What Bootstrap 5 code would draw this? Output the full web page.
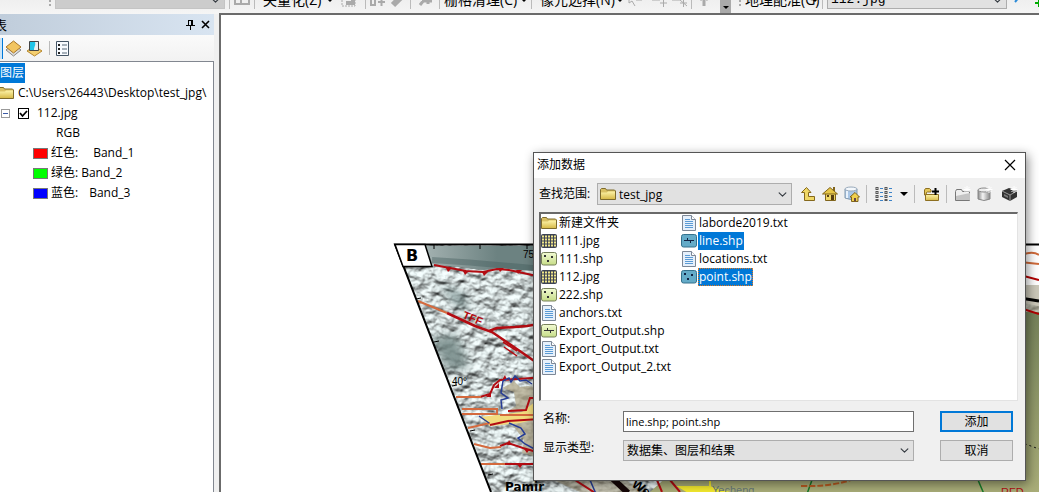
<!DOCTYPE html>
<html lang="zh-CN">
<head>
<meta charset="utf-8">
<meta name="viewport" content="width=device-width, initial-scale=1">
<title>添加数据</title>
<link href="https://cdn.jsdelivr.net/npm/bootstrap@5.3.0/dist/css/bootstrap.min.css" rel="stylesheet">
<style>
  :root { --ui: #f0f0f0; --sel: #0078d7; }
  body { background: var(--ui); color: #000; font: 12px/20px "Open Sans", "Noto Sans CJK SC", sans-serif; }
  button, input, select { font: inherit; color: inherit; }
  svg { display: block; flex: none; }
  .icon-btn { border: 0; padding: 0; background: none; flex: none; }

  /* menu strip, scrolled half out at the top */
  .strip { height: 14px; background: linear-gradient(#efefef, #f5f5f5); }
  .strip-row { height: 28px; margin-top: -14px; padding-left: 49px; font-size: 14px; white-space: nowrap; }
  .strip-row > * { flex: none; }
  .strip-row .icon-btn { width: 16px; height: 16px; }
  .strip-row svg { fill: none; stroke: #aaa; stroke-width: 2; }
  .menu-btn { border: 0; padding: 0; background: none; text-align: left; }
  .menu-w { width: 64px; }
  .menu-l { width: 77px; }
  .menu-r { width: 67px; }
  .vr-line { width: 1px; height: 18px; background: #bbb; }
  .grip { width: 2px; height: 16px; background: repeating-linear-gradient(#aaa 0 2px, transparent 2px 4px); }
  .caret { width: 0; height: 0; border: 3px solid transparent; border-top-color: #000; border-bottom: 0; }
  .form-select.combo { height: 21px; padding: 0 20px 0 3px; font: inherit; color: #000; border: 1px solid #adadad; border-radius: 0; background-color: #e1e1e1; background-size: 9px 9px; background-position: right 4px center; line-height: 19px; }
  .form-select.strip-combo { height: 18px; line-height: 16px; }
  .form-select.combo-off { width: 170px; background-color: #ccc; border-color: #c4c4c4; }
  .form-select.combo-ras { width: 180px; font-family: "Liberation Mono", monospace; font-size: 13px; }
  .strip-row .more { width: 11px; height: 26px; background: #aaa; }

  /* table of contents */
  .toc { width: 214px; flex: none; }
  .toc-title { height: 21px; background: linear-gradient(90deg, #c0cddb, #d8e4f1); font-size: 13px; padding-right: 3px; }
  .toc-title span { margin-left: -6px; }
  .toc-tools { height: 26px; background: linear-gradient(#fafafa, #f2f2f2); }
  .toc-tools .icon-btn { margin: 0 2px; }
  .toc-tools .vr-line { height: 14px; margin: 0 4px; }
  .toc-on { width: 3px; height: 21px; background: #cce4f7; border-right: 1px solid var(--sel); }
  .tree { background: #fff; border-top: 1px solid #828790; border-right: 1px solid #828790; padding-top: 1px; white-space: nowrap; }
  .tree li { height: 20px; overflow: hidden; }
  .root-node { background: var(--sel); color: #fff; padding-right: 1px; }
  .tick { appearance: none; width: 11px; height: 11px; border: 1px solid #000; margin: 0; background: #fff; flex: none; }
  .tick:checked { background: #fff url("data:image/svg+xml,%3Csvg xmlns='http://www.w3.org/2000/svg' viewBox='0 0 9 9'%3E%3Cpath d='M1 4l2.5 3L8 2' fill='none' stroke='black' stroke-width='1.8'/%3E%3C/svg%3E"); }
  .twist { width: 9px; height: 9px; border: 1px solid #999; background: linear-gradient(#3b5aa5, #3b5aa5) center/5px 1px no-repeat #fff; padding: 0; flex: none; }
  .layer-row { padding-left: 1px; }
  .chip { width: 15px; height: 11px; border: 1px solid #777; flex: none; }
  .chip-r { background: #f00; }
  .chip-g { background: #0f0; }
  .chip-b { background: #00f; }
  .band { padding-left: 33px; gap: 3px; }

  .map-pane { border-left: 2px solid #6b6b6b; border-top: 2px solid #6b6b6b; margin-left: 5px; background: #fff; margin-top: -1px; }
  .map-pane svg { height: 477px; min-width: 818px; width: 100%; }

  /* dialog */
  .dlg { left: 533px; top: 152px; width: 493px; background: var(--ui); border: 1px solid #555; box-shadow: 2px 3px 10px rgba(0,0,0,.45); }
  .dlg-title { height: 25px; background: #fff; padding: 0 9px 2px 3px; }
  .dlg-tools { height: 34px; padding: 0 7px 2px 5px; }
  .dlg-tools .near { margin-left: 6px; }
  .where { width: 195px; }
  .form-select.where-combo { padding-left: 21px; height: 22px; }
  .where svg { left: 3px; top: 3px; }
  .files { margin: 0 7px 0 5px; height: 189px; background: #fff; border: 1px solid #e3e3e3; border-top: 2px solid #696969; border-left: 2px solid #696969; display: grid; grid-auto-flow: column; grid-template-rows: repeat(9, 18px); grid-auto-columns: 140px; }
  .files li { display: flex; align-items: center; line-height: 18px; gap: 1px; }
  .files a { color: #000; text-decoration: none; padding: 0 1px; white-space: nowrap; }
  .files a.on { background: var(--sel); color: #fff; }
  .files a.focus-on { outline: 1px dotted #e07820; outline-offset: -1px; }
  .fields { display: grid; grid-template-columns: 80px 1fr 73px; row-gap: 8px; padding: 10px 12px 19px 9px; align-items: center; }
  .fields label { margin-top: -5px; }
  .form-control.name-box { height: 21px; padding: 0 2px; border: 1px solid #6f6f6f; border-radius: 0; font-size: 11px; line-height: 19px; color: #000; }
  .field-cell { padding-right: 26px; }
  .btn.cmd { height: 21px; padding: 0; border: 1px solid #adadad; border-radius: 0; background: #e1e1e1; font-size: 12px; line-height: 18px; color: #000; }
  .btn.cmd-main { border: 2px solid var(--sel); line-height: 16px; }
</style>
</head>
<body class="overflow-hidden position-relative min-vh-100">

<svg width="0" height="0" class="position-absolute">
  <defs>
    <linearGradient id="gold" x2="0" y2="1"><stop stop-color="#fdf3a8"/><stop offset="1" stop-color="#d8bb4a"/></linearGradient>
    <linearGradient id="steel"><stop stop-color="#888"/><stop offset=".4" stop-color="#f4f4f4"/><stop offset="1" stop-color="#888"/></linearGradient>
    <linearGradient id="lime" x2="0" y2="1"><stop stop-color="#f2fad4"/><stop offset="1" stop-color="#c6dc86"/></linearGradient>
    <symbol id="folder" viewBox="0 0 16 14"><path d="M.5 12.500V2.500l1-1h4l1 1.500h8l1 1v8.500z" fill="#d9c063" stroke="#7d6a2c"/><path d="M1 12V5.500h6l1-1h7V12z" fill="url(#gold)"/></symbol>
    <symbol id="raster" viewBox="0 0 16 14"><rect width="16" height="14" rx="2" fill="#3d4354"/><path d="M1 2.500h14M1 5.500h14M1 8.500h14M1 11.500h14" stroke="#f0e68a" stroke-width="2" stroke-dasharray="2 1"/></symbol>
    <symbol id="points" viewBox="0 0 16 14"><rect x=".5" y=".5" width="15" height="12.500" rx="2" fill="url(#lime)" stroke="#77805a"/><path d="M3 3h2v2H3zM10 4h2v2h-2zM6 8h2v2H6z" fill="#333"/></symbol>
    <symbol id="points-on" viewBox="0 0 16 14"><rect x=".5" y=".5" width="15" height="12.500" rx="2" fill="#64abc8" stroke="#34718d"/><path d="M3 3h2v2H3zM10 4h2v2h-2zM6 8h2v2H6z" fill="#124"/></symbol>
    <symbol id="lines" viewBox="0 0 16 14"><rect x=".5" y=".5" width="15" height="12.500" rx="2" fill="url(#lime)" stroke="#77805a"/><path d="M3 6.500h10M6.500 4v3M9.500 6.500V9" stroke="#333" fill="none"/></symbol>
    <symbol id="lines-on" viewBox="0 0 16 14"><rect x=".5" y=".5" width="15" height="12.500" rx="2" fill="#64abc8" stroke="#34718d"/><path d="M3 6.500h10M6.500 4v3M9.500 6.500V9" stroke="#124" fill="none"/></symbol>
    <symbol id="text" viewBox="0 0 16 16"><path d="M1.500.5h9l4 4v11h-13z" fill="#e6f0fb" stroke="#7c8796"/><path d="M10.500.5v4h4" fill="#fff" stroke="#7c8796"/><path d="M4 4.500h5M4 6.500h8M4 8.500h8M4 10.500h8M4 12.500h8" stroke="#5b9bd5"/></symbol>
  </defs>
</svg>

<header class="strip overflow-hidden">
  <div class="strip-row d-flex align-items-center">
    <i class="grip"></i>
    <select class="form-select combo strip-combo combo-off ms-1" aria-label="图层" disabled><option></option></select>
    <i class="vr-line ms-1"></i>
    <button class="icon-btn mx-1" aria-label="栅格"><svg width="16" height="16"><path d="M1 3h14v9H1zM7 3v9M7 7h8"/></svg></button>
    <i class="vr-line me-2"></i>
    <button class="menu-btn menu-w">矢量化(Z)</button><i class="caret me-2"></i>
    <button class="icon-btn me-2"><svg width="16" height="16"><path d="M1 2v12h13V2" stroke-width="1" stroke-dasharray="2 1"/><path d="M5 11h7V5" stroke-width="4"/></svg></button>
    <i class="vr-line me-1"></i>
    <button class="icon-btn me-1"><svg width="16" height="16"><path d="M1 2h4v11H1zM8 10h7M11.500 6v8"/></svg></button>
    <button class="icon-btn me-1"><svg width="16" height="16"><path d="M3 13l9-9" stroke-width="6"/></svg></button>
    <i class="vr-line me-2"></i>
    <button class="icon-btn me-1"><svg width="16" height="16"><path d="M1 13l4-5M3 9h10M9 5v7" stroke-width="3"/></svg></button>
    <i class="vr-line me-1"></i>
    <button class="menu-btn menu-l">栅格清理(C)</button><i class="caret me-1"></i>
    <i class="vr-line me-2"></i>
    <button class="menu-btn menu-l">像元选择(N)</button><i class="caret me-1"></i>
    <button class="icon-btn me-2"><svg width="16" height="16"><path d="M2 1v10l3-2 3 5M9 8h6" stroke-width="1"/></svg></button>
    <button class="icon-btn me-1"><svg width="16" height="16"><path d="M1 8h8M9 11h7M12.500 7v8" stroke-width="1"/></svg></button>
    <button class="icon-btn me-1"><svg width="16" height="16"><path d="M1 8h8M9 11h7M12.500 7v8M9 8l7 6" stroke-width="1"/></svg></button>
    <i class="vr-line me-1"></i>
    <button class="icon-btn me-2"><svg width="16" height="16"><path d="M8 14V4M4 8l4-4 4 4" stroke-width="3"/></svg></button>
    <button class="icon-btn more d-flex flex-column align-items-center justify-content-end pb-1" aria-label="更多"><i class="caret"></i></button>
    <i class="grip ms-2 me-1"></i>
    <button class="menu-btn menu-r">地理配准(G)</button><i class="caret me-1"></i>
    <i class="vr-line me-1"></i>
    <select class="form-select combo strip-combo combo-ras" aria-label="栅格图层"><option>112.jpg</option></select>
    <button class="icon-btn me-2"><svg width="16" height="16"><path d="M8 10l6-7" stroke="#2a8ad8"/><path d="M4 11h8M8 7v8" stroke="#0a0" transform="translate(0 -7)"/></svg></button>
    <button class="icon-btn"><svg width="16" height="16"><path d="M8 10l6-7" stroke="#2a8ad8"/><path d="M4 11h8M8 7v8" stroke="#0a0"/></svg></button>
  </div>
</header>

<div class="d-flex align-items-stretch">
  <aside class="toc d-flex flex-column">
    <div class="toc-title d-flex align-items-center overflow-hidden">
      <span class="me-auto">表</span>
      <button class="icon-btn me-1" aria-label="固定"><svg width="11" height="11"><path d="M3.500 1v5M7.500 1v5M3 1.500h5M1 6.500h9M5.500 7v4" stroke="#000" fill="none"/><path d="M7 1v5" stroke="#000" stroke-width="2"/></svg></button>
      <button class="icon-btn" aria-label="关闭"><svg width="11" height="11"><path d="M2 2l7 7M9 2l-7 7" stroke="#000" stroke-width="1.600"/></svg></button>
    </div>
    <div class="toc-tools d-flex align-items-center">
      <i class="toc-on"></i>
      <button class="icon-btn" aria-label="按源列出"><svg width="17" height="17"><path d="M1 10l7.500-6L16 10l-7.500 6z" fill="#ddd" stroke="#888"/><path d="M1 7l7.500-6L16 7l-7.500 6z" fill="#f2c562" stroke="#a8762a"/></svg></button>
      <button class="icon-btn" aria-label="按可见性列出"><svg width="17" height="17"><path d="M1 11l7.500-5L16 11l-7.500 5z" fill="#f5cf70" stroke="#b5862c"/><path d="M3.500 1.500h9v9h-9z" fill="#21c5e8" stroke="#444"/><path d="M8 10c0-4 2-4 1-8h3v8z" fill="#eee"/></svg></button>
      <i class="vr-line"></i>
      <button class="icon-btn" aria-label="选项"><svg width="13" height="15"><path d="M.5.5h12v14H.5z" fill="#f8fbff" stroke="#456"/><path d="M2 3h2v2H2zM2 7h2v2H2zM2 11h2v2H2z" fill="#222"/><path d="M6 4h5M6 8h5M6 12h5" stroke="#567"/></svg></button>
    </div>
    <ul class="tree list-unstyled mb-0 flex-grow-1">
      <li><span class="root-node d-inline-block">图层</span></li>
      <li class="d-flex align-items-center gap-1"><svg width="14" height="14" viewBox="2 0 14 14"><use href="#folder" width="16" height="14"/></svg>C:\Users\26443\Desktop\test_jpg\</li>
      <li class="layer-row d-flex align-items-center"><button class="twist me-2" aria-label="折叠"></button><input class="tick" type="checkbox" id="lyr" checked><label for="lyr" class="ms-2">112.jpg</label></li>
      <li class="ps-5"><span class="ps-2">RGB</span></li>
      <li class="band d-flex align-items-center"><i class="chip chip-r"></i>红色:<span class="ms-2 ps-1">Band_1</span></li>
      <li class="band d-flex align-items-center"><i class="chip chip-g"></i>绿色:<span>Band_2</span></li>
      <li class="band d-flex align-items-center"><i class="chip chip-b"></i>蓝色:<span class="ms-2">Band_3</span></li>
    </ul>
  </aside>

  <main class="map-pane flex-grow-1 overflow-hidden">
    <svg viewBox="221 15 818 477" preserveAspectRatio="xMinYMin slice" role="img" aria-label="地图">
      <defs>
        <clipPath id="frame"><path d="M395 244H1039V492H491z"/></clipPath>
        <filter id="relief" x="0" y="0" width="100%" height="100%" color-interpolation-filters="sRGB">
          <feTurbulence type="fractalNoise" baseFrequency=".1 .16" numOctaves="4" seed="8"/>
          <feDiffuseLighting surfaceScale="3" diffuseConstant="1.080" lighting-color="#e6f0f0"><feDistantLight azimuth="235" elevation="58"/></feDiffuseLighting>
        </filter>
        <filter id="soft" x="-50%" y="-50%" width="200%" height="200%"><feGaussianBlur stdDeviation="5"/></filter>
        <linearGradient id="plain" x2="0" y2="1"><stop stop-color="#75825a"/><stop offset="1" stop-color="#a9ad78"/></linearGradient>
        <linearGradient id="steppe"><stop stop-color="#a3b1b0"/><stop offset=".6" stop-color="#6c8281"/></linearGradient>
      </defs>
      <g clip-path="url(#frame)">
        <rect x="395" y="244" width="644" height="248" filter="url(#relief)" transform="rotate(12 395 244) scale(1.200 1.500) translate(-66 -130)"/>
        <path d="M425 246H545V272L500 268 484 270 432 264z" fill="url(#steppe)"/>
        <path d="M432 260q50 3 110 9" stroke="#405a5a" stroke-width="6" fill="none" opacity=".4"/>
        <path d="M428 338l28-4 14 34-22 2z" fill="#718583" opacity=".85" filter="url(#soft)"/>
        <path d="M440 285l24 8 5 20-14-8z" fill="#647a79" opacity=".7" filter="url(#soft)"/>
        <path d="M502 388l8-4 4-3 6 6 8-1 12 2v70l-18-5 2-13-10-13-6-16 8-5-2-14-12-4z" fill="#b0a78a" opacity=".75"/>
        <path d="M480 417l17-2 25-3 18-14v20l-20 5-30 3z" fill="#f2dc7e"/>
        <path d="M540 474h80l20 18h-60z" fill="#b0a78a" opacity=".6"/>
        <path d="M650 492l20-18h369v18z" fill="#a9ad78"/>
        <path d="M1020 285h19v30h-19z" fill="#a9a38a" opacity=".6"/>
        <path d="M1020 312h19v180h-19z" fill="url(#plain)"/>
        <path d="M1020 256q12-6 19-1M1020 262l19 2" stroke="#d06a3a" stroke-width="2" fill="none"/>
        <path d="M1020 275l19 5M1020 308l19 6" stroke="#b30000" stroke-width="2"/>
        <path d="M1020 298l19 3" stroke="#000" stroke-width="3"/>
        <path d="M1020 442l19 7" stroke="#111" stroke-dasharray="2 3"/>
        <g fill="none" stroke="#b30c12" stroke-width="2">
          <path d="M434 265l16 3 16 3 17 1 14-3 12 1 28 6"/>
          <path d="M447 313l28 13 17 6 22 15 26 18" stroke-width="2.500"/>
          <path d="M489 331l8-3 18-1 12-1 12-2" stroke-width="2.500"/>
          <path d="M503 342l14 9M504 347l13 9" stroke-width="1.500"/>
          <path d="M480 397l10-3 4-9 6-5 18-1 14-1h8"/>
          <path d="M490 425l18-4 32-2"/>
          <path d="M508 411l18-1 4-12h10"/>
          <path d="M500 446l8-3 15 5 17 5M505 464h35"/>
          <path d="M575 480l28 18M657 480l5 12M670 480l10 12"/>
        </g>
        <path d="M612 478l16 15" stroke="#160707" stroke-width="6"/>
        <g fill="#b30c12"><path d="M446 268h6l-4 4zM463 271h6l-4 4zM482 272h6l-4 4zM498 268h6l-4 4zM516 270h6l-4 4zM486 397h5v-5zM494 388h5v-5zM502 380h5l-2-5zM507 445h5l-3-5zM517 464h6l-3 4zM524 449h6l-3 4z"/></g>
        <g fill="none" stroke="#d46a3e" stroke-width="2"><path d="M418 301l29 12M456 397h25M468 428l22-5M474 444l16 4 11-1M481 464h24M462 409h35v5h-35M500 415h40"/></g>
        <path d="M502 409l-1-9 7-2-7-5 2-12 6-3 2 4 4-6 5 5 6-1 6 4M479 416l10 7M509 423l12 5 4 6-7 4 7 6 15 8M590 480l6 14" fill="none" stroke="#263d96" stroke-width="1.500"/>
        <path d="M812 480l-5 14M978 480l6 14" stroke="#167a28" stroke-width="1.500"/>
        <path d="M801 486q28 1 50-6" stroke="#ba5c22" stroke-width="2" stroke-dasharray="6 2" fill="none"/>
        <path d="M680 487h30l8 3 12 3h-40zM710 470v22" stroke="#f4ea2e" fill="#f4ea2e" stroke-width="2"/>
      </g>
      <path d="M1039 244.500H395L491 492" fill="none" stroke="#000" stroke-width="2"/>
      <path d="M395 244.500h30l7 22h-29z" fill="#fff" stroke="#000" stroke-width="1.500"/>
      <path d="M434 245v4M480 245v4M527 245v4M416 299l5-1M434 342l5-1M452 386l5-1M470 431l5-1M488 475l5-1" stroke="#000"/>
      <g font-family="Liberation Sans, sans-serif">
        <text x="406" y="261" font-family="DejaVu Sans, sans-serif" font-size="16" font-weight="700">B</text>
        <text x="523" y="258" font-size="10">75°</text>
        <text x="452" y="385" font-size="10">40°</text>
        <text x="462" y="318" font-size="11" font-weight="700" fill="#b30c12" transform="rotate(22 462 318)">TFF</text>
        <text x="505" y="491" font-family="DejaVu Sans, sans-serif" font-size="12" font-weight="700">Pamir</text>
        <text x="631" y="486" font-size="13" font-weight="700" transform="rotate(35 631 486)">We</text>
        <text x="712" y="494" font-size="11" fill="#667777">Yecheng</text>
        <text x="1001" y="496" font-size="11" fill="#b30c12">RFD</text>
      </g>
    </svg>
  </main>
</div>

<section class="dlg position-absolute" role="dialog" aria-labelledby="dlgTitle">
  <div class="dlg-title d-flex align-items-center justify-content-between">
    <span id="dlgTitle">添加数据</span>
    <button class="icon-btn" aria-label="关闭"><svg width="12" height="12"><path d="M1 1l10 10M11 1L1 11" stroke="#000" stroke-width="1.200"/></svg></button>
  </div>
  <div class="dlg-tools d-flex align-items-center">
    <label for="where" class="me-auto text-nowrap">查找范围:</label>
    <div class="where position-relative">
      <select id="where" class="form-select combo where-combo"><option>test_jpg</option></select>
      <svg class="position-absolute" width="16" height="16"><use href="#folder" width="16" height="16"/></svg>
    </div>
    <button class="icon-btn ms-2" aria-label="向上"><svg width="16" height="16"><path d="M6.500 1.500l4.500 5H8.500v4h6v4h-10v-8H1.500z" fill="#efd765" stroke="#85681c"/></svg></button>
    <button class="icon-btn near" aria-label="主目录"><svg width="16" height="16"><path d="M11 1h2v4h-2z" fill="#80641c"/><path d="M3.500 7.500h10v7h-10z" fill="#efd765" stroke="#80641c"/><path d="M.5 8L8 1.500 15.500 8z" fill="#e6c648" stroke="#80641c"/><path d="M5 9h2v2H5zM9 9h3v5H9z" fill="#553d12"/></svg></button>
    <button class="icon-btn near" aria-label="默认地理数据库"><svg width="16" height="16"><path d="M1 3v9q6 3 12 0V3z" fill="#a9c6e6" stroke="#8399ad"/><ellipse cx="7" cy="3" rx="6" ry="2" fill="#f4f8fc" stroke="#9ab"/><path d="M3 5v7" stroke="#e8f2fc" stroke-width="2"/><path d="M6 11l5-4.500L15.500 11H14v4.500H7.500V11z" fill="#efd04f" stroke="#80641c"/><path d="M10 12h2v3h-2z" fill="#644"/></svg></button>
    <i class="vr-line near me-2"></i>
    <button class="icon-btn d-flex align-items-center gap-2" aria-label="视图"><svg width="17" height="16"><path d="M2 1v14M11 1v14" stroke="#555" stroke-width="3" stroke-dasharray="3 1"/><path d="M1.500 2.500h1M1.500 6.500h1M1.500 10.500h1M10.500 2.500h1M10.500 6.500h1M10.500 10.500h1" stroke="#fff"/><path d="M5 2.500h3M5 6.500h3M5 10.500h3M5 14.500h3M14 2.500h3M14 6.500h3M14 10.500h3M14 14.500h3" stroke="#3c83c8"/></svg><svg width="8" height="4"><path d="M0 0h8L4 4z"/></svg></button>
    <i class="vr-line near me-2"></i>
    <button class="icon-btn" aria-label="连接文件夹"><svg width="17" height="16"><path d="M1.500 4l1-1.500h4L8 4v2H4.500L3 7l1 2H1.500z" fill="#e3c75a" stroke="#8d6f20"/><path d="M2.500 8.500h13v6h-13z" fill="url(#gold)" stroke="#8d6f20"/><path d="M9 5.500h7M12.500 2v7" stroke="#000" stroke-width="2"/></svg></button>
    <i class="vr-line near me-2"></i>
    <button class="icon-btn" aria-label="新建文件夹"><svg width="16" height="16"><path d="M.5 14.500v-9l1-2h5l1 2h7v9z" fill="#eee" stroke="#777"/><path d="M1 10l14-3v7H1z" fill="#c4c4c4"/><path d="M12 0v7M8.500 3.500h7M9.500 1l5 5M14.500 1l-5 5" stroke="#fff"/></svg></button>
    <button class="icon-btn near" aria-label="新建数据库"><svg width="16" height="16"><path d="M1 4v9q6 3 12 0V4z" fill="url(#steel)" stroke="#888"/><ellipse cx="7" cy="4" rx="6" ry="2" fill="#eee" stroke="#888"/><path d="M12 0v7M8.500 3.500h7M9.500 1l5 5M14.500 1l-5 5" stroke="#fff"/></svg></button>
    <button class="icon-btn ms-2" aria-label="新建工具箱"><svg width="17" height="16"><path d="M1 5l7-3 8 3v6l-7 4-8-4z" fill="#333"/><path d="M1 5l8 4 7-4M9 9v6" stroke="#999" fill="none"/><path d="M3 8l4 2v2L3 10z" fill="#777"/><path d="M13 0v7M9.500 3.500h7M10.500 1l5 5M15.500 1l-5 5" stroke="#fff"/></svg></button>
  </div>
  <ul class="files list-unstyled">
    <li><svg width="16" height="14"><use href="#folder"/></svg><a href="#">新建文件夹</a></li>
    <li><svg width="16" height="14"><use href="#raster"/></svg><a href="#">111.jpg</a></li>
    <li><svg width="16" height="14"><use href="#points"/></svg><a href="#">111.shp</a></li>
    <li><svg width="16" height="14"><use href="#raster"/></svg><a href="#">112.jpg</a></li>
    <li><svg width="16" height="14"><use href="#points"/></svg><a href="#">222.shp</a></li>
    <li><svg width="16" height="16"><use href="#text"/></svg><a href="#">anchors.txt</a></li>
    <li><svg width="16" height="14"><use href="#lines"/></svg><a href="#">Export_Output.shp</a></li>
    <li><svg width="16" height="16"><use href="#text"/></svg><a href="#">Export_Output.txt</a></li>
    <li><svg width="16" height="16"><use href="#text"/></svg><a href="#">Export_Output_2.txt</a></li>
    <li><svg width="16" height="16"><use href="#text"/></svg><a href="#">laborde2019.txt</a></li>
    <li><svg width="16" height="14"><use href="#lines-on"/></svg><a href="#" class="on">line.shp</a></li>
    <li><svg width="16" height="16"><use href="#text"/></svg><a href="#">locations.txt</a></li>
    <li><svg width="16" height="14"><use href="#points-on"/></svg><a href="#" class="on focus-on">point.shp</a></li>
  </ul>
  <form class="fields">
    <label for="fname">名称:</label>
    <div class="field-cell"><input id="fname" class="form-control name-box" type="text" value="line.shp; point.shp"></div>
    <button type="button" class="btn cmd cmd-main">添加</button>
    <label for="ftype">显示类型:</label>
    <div class="field-cell"><select id="ftype" class="form-select combo"><option>数据集、图层和结果</option></select></div>
    <button type="button" class="btn cmd">取消</button>
  </form>
</section>

<script src="https://cdn.jsdelivr.net/npm/bootstrap@5.3.0/dist/js/bootstrap.bundle.min.js"></script>
</body>
</html>
